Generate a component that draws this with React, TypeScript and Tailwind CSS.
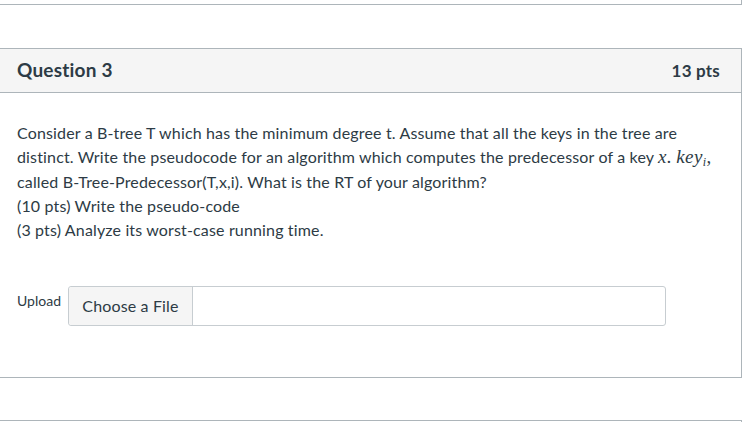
export default function App() {
  return (
    <div className="w-[750px] h-[422px] overflow-hidden bg-white font-['Lato','Noto_Sans',sans-serif] text-[#2d3b45]">
      {/* previous question, tail end */}
      <div className="w-[742px] h-[5px] border-b border-r border-[#adb5ba]" />

      {/* question 3 */}
      <div className="mt-[43px] w-[742px] border border-l-0 border-[#adb5ba]">
        <div className="h-[44px] flex items-center justify-between pl-[17px] pr-[21px] bg-[#f5f5f5] border-b border-[#adb5ba]">
          <h2 className="text-[19px] font-bold tracking-[0.2px]">Question 3</h2>
          <span className="text-[17px] font-bold tracking-[0.2px]">13 pts</span>
        </div>

        <div className="h-[284px] px-[17px] pt-[28px]">
          <div className="text-[16px] leading-[24.3px] tracking-[0.15px]">
            <p>
              Consider a B-tree T which has the minimum degree t. Assume that all the keys in the tree are
              <br />
              distinct. Write the pseudocode for an algorithm which computes the predecessor of a key{' '}
              <span className="font-['Liberation_Serif',serif] text-[19px] leading-none italic tracking-[0.4px]">
                x.&thinsp;key<sub className="text-[12px]">i</sub>
                <span className="not-italic">,</span>
              </span>
              <br />
              called B-Tree-Predecessor(T,x,i). What is the RT of your algorithm?
            </p>
            <p>(10 pts) Write the pseudo-code</p>
            <p>(3 pts) Analyze its worst-case running time.</p>
          </div>

          <div className="mt-[44px] flex items-start gap-[7px]">
            <span className="pt-[6px] text-[14px] leading-[18px]">Upload</span>
            <div className="w-[598px] h-[40px] flex border border-[#c7cdd1] rounded-[3px]">
              <button className="h-full w-[124px] bg-[#f5f5f5] border-r border-[#c7cdd1] rounded-l-[3px] text-[16px] tracking-[0.15px] text-[#2d3b45]">
                Choose a File
              </button>
            </div>
          </div>
        </div>
      </div>

      {/* next question, top edge */}
      <div className="mt-[42px] w-[742px] h-[20px] border-t border-r border-[#adb5ba]" />
    </div>
  )
}
